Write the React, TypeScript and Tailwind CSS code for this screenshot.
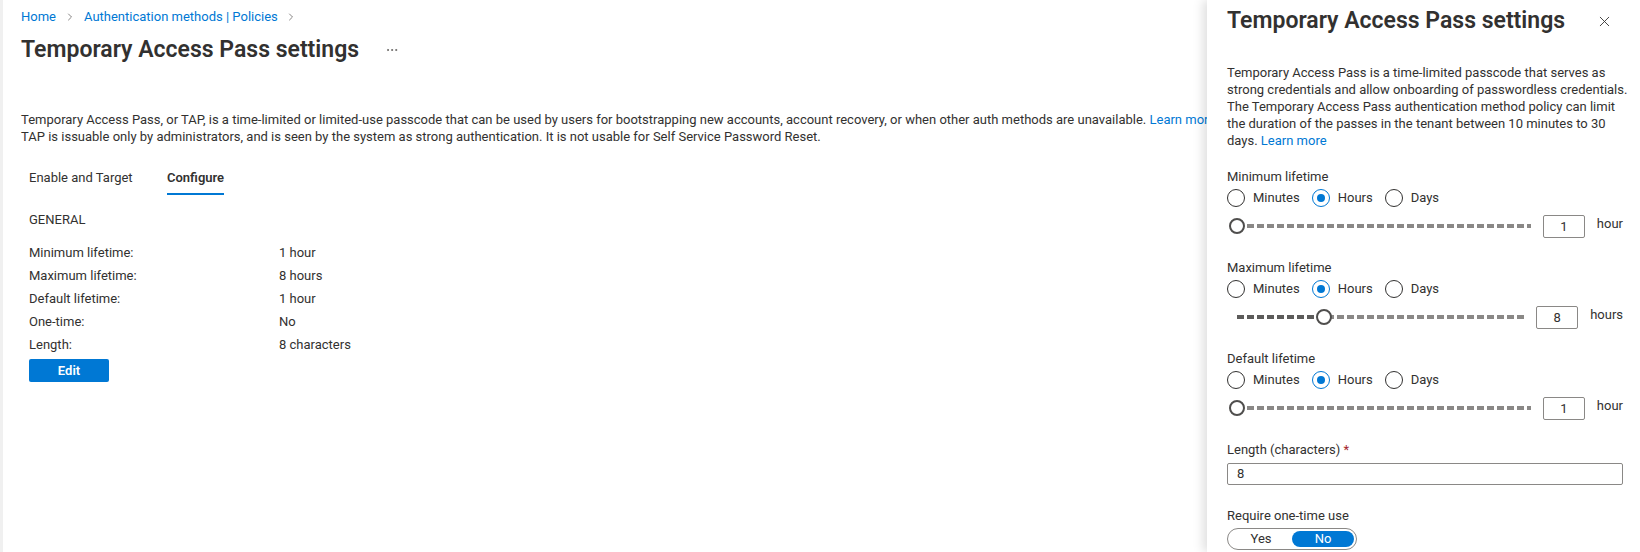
import { ChevronRight, Ellipsis, X } from 'lucide-react';

const summary = [
  { label: 'Minimum lifetime:', value: '1 hour' },
  { label: 'Maximum lifetime:', value: '8 hours' },
  { label: 'Default lifetime:', value: '1 hour' },
  { label: 'One-time:', value: 'No' },
  { label: 'Length:', value: '8 characters' },
];

function Radio({ label, checked }: { label: string; checked?: boolean }) {
  return (
    <label className="flex items-center gap-2">
      <span
        className={
          checked
            ? 'flex h-[18px] w-[18px] items-center justify-center rounded-full border border-[#0078d4]'
            : 'flex h-[18px] w-[18px] items-center justify-center rounded-full border border-[#323130]'
        }
      >
        {checked && <span className="h-[8px] w-[8px] rounded-full bg-[#0078d4]" />}
      </span>
      <span>{label}</span>
    </label>
  );
}

function Slider({ value, min, max }: { value: number; min: number; max: number }) {
  const pct = (value - min) / (max - min);
  return (
    <div className="relative h-[24px] flex-1">
      <div className="absolute left-[8px] right-0 top-[10px] h-[4px] bg-[repeating-linear-gradient(90deg,#8a8886_0_7px,transparent_7px_10px)]" />
      <div
        className="absolute left-[8px] top-[10px] h-[4px] bg-[repeating-linear-gradient(90deg,#5c5b5a_0_7px,transparent_7px_10px)]"
        style={{ width: `calc(${pct} * (100% - 8px))` }}
      />
      <div
        className="absolute top-[4px] h-[16px] w-[16px] rounded-full border-2 border-[#4f4e4d] bg-white"
        style={{ left: `calc(${pct} * (100% - 8px))` }}
      />
    </div>
  );
}

function LifetimeField({ title, value, unit }: { title: string; value: number; unit: string }) {
  return (
    <div className="mb-[20px]">
      <div className="h-[20px] leading-[20px]">{title}</div>
      <div className="flex h-[22px] items-center gap-3">
        <Radio label="Minutes" />
        <Radio label="Hours" checked />
        <Radio label="Days" />
      </div>
      <div className="mt-[5px] flex h-[24px] items-center gap-3 pl-[2px]">
        <Slider value={value} min={1} max={24} />
        <div className="flex h-[23px] w-[42px] items-center justify-center rounded-[2px] border border-[#8a8886] pt-[2px]">
          {value}
        </div>
        <span className="mb-[4px]">{unit}</span>
      </div>
    </div>
  );
}

export default function App() {
  return (
    <div className="relative h-[552px] w-[1640px] overflow-hidden bg-white text-[13px] text-[#323130] [font-family:Roboto,'Segoe_UI',sans-serif]">
      <div className="flex h-full">
        <div className="w-[3px] bg-[#f0f0f0]" />
        <main className="flex-1 pl-[18px] pt-[8px]">
          {/* breadcrumb */}
          <nav className="flex h-[18px] items-center text-[#0078d4]">
            <span>Home</span>
            <ChevronRight size={12} strokeWidth={1.5} className="mx-[8px] text-[#605e5c]" />
            <span>Authentication methods | Policies</span>
            <ChevronRight size={12} strokeWidth={1.5} className="mx-[7px] text-[#605e5c]" />
          </nav>

          <div className="mt-[8px] flex h-[32px] items-center">
            <h1 className="text-[23px] font-semibold leading-[32px]">Temporary Access Pass settings</h1>
            <Ellipsis size={14} strokeWidth={1.5} className="ml-[26px] text-[#605e5c]" />
          </div>

          <div className="mt-[45px] whitespace-nowrap leading-[17px]">
            <p>
              Temporary Access Pass, or TAP, is a time-limited or limited-use passcode that can be used by users for
              bootstrapping new accounts, account recovery, or when other auth methods are unavailable.{' '}
              <span className="text-[#0078d4]">Learn more</span>
            </p>
            <p>
              TAP is issuable only by administrators, and is seen by the system as strong authentication. It is not
              usable for Self Service Password Reset.
            </p>
          </div>

          {/* tabs */}
          <div className="mt-[23px] flex pl-[8px]">
            <div className="w-[138px]">
              <div className="h-[20px] leading-[20px]">Enable and Target</div>
            </div>
            <div>
              <div className="h-[20px] font-semibold leading-[20px]">Configure</div>
              <div className="mt-[5px] h-[2px] bg-[#0078d4]" />
            </div>
          </div>

          <div className="pl-[8px]">
            <div className="mt-[16px] h-[18px] leading-[18px]">GENERAL</div>
            <div className="mt-[12px]">
              {summary.map((row) => (
                <div key={row.label} className="flex h-[23px] items-center">
                  <span className="w-[250px]">{row.label}</span>
                  <span>{row.value}</span>
                </div>
              ))}
            </div>
            <button className="mt-[3px] h-[23px] w-[80px] rounded-[2px] bg-[#0078d4] font-semibold text-white">
              Edit
            </button>
          </div>
        </main>
      </div>

      {/* side panel */}
      <aside className="absolute right-0 top-0 h-full w-[433px] bg-white pl-[20px] pr-[17px] shadow-[-4px_0_10px_rgba(0,0,0,0.13)]">
        <div className="mt-[5px] flex h-[32px] items-center justify-between">
          <h2 className="text-[23px] font-semibold leading-[32px]">Temporary Access Pass settings</h2>
          <X size={17} strokeWidth={1.25} className="mr-[10px] text-[#323130]" />
        </div>

        <p className="mt-[27px] whitespace-nowrap leading-[17px]">
          Temporary Access Pass is a time-limited passcode that serves as
          <br />
          strong credentials and allow onboarding of passwordless credentials.
          <br />
          The Temporary Access Pass authentication method policy can limit
          <br />
          the duration of the passes in the tenant between 10 minutes to 30
          <br />
          days. <span className="text-[#0078d4]">Learn more</span>
        </p>

        <div className="mt-[18px]">
          <LifetimeField title="Minimum lifetime" value={1} unit="hour" />
          <LifetimeField title="Maximum lifetime" value={8} unit="hours" />
          <LifetimeField title="Default lifetime" value={1} unit="hour" />
        </div>

        <div className="mt-[1px]">
          <div className="h-[20px] leading-[20px]">
            Length (characters) <span className="text-[#a4262c]">*</span>
          </div>
          <div className="mt-[3px] flex h-[22px] items-center rounded-[2px] border border-[#8a8886] px-[9px]">8</div>
        </div>

        <div className="mt-[21px]">
          <div className="h-[20px] leading-[20px]">Require one-time use</div>
          <div className="mt-[2px] flex h-[22px] w-[130px] rounded-full border border-[#8a8886] p-[2px]">
            <span className="flex flex-1 items-center justify-center">Yes</span>
            <span className="flex flex-1 items-center justify-center rounded-full bg-[#0078d4] text-white">No</span>
          </div>
        </div>
      </aside>
    </div>
  );
}
